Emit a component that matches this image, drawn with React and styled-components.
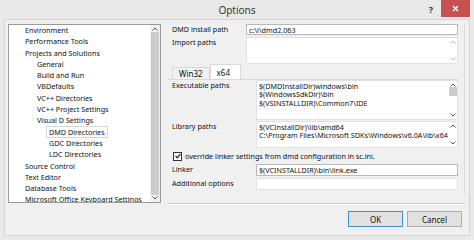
import styled, { createGlobalStyle } from 'styled-components'

const GlobalStyle = createGlobalStyle`
  body {
    margin: 0;
    background: #e8e8e8;
    font-family: "Noto Sans", "Open Sans", sans-serif;
    font-size: 7.2px;
    color: #111;
  }
`

const Window = styled.div`
  width: 474px;
  height: 240px;
  background: #e9e9e9;
  display: flex;
  flex-direction: column;
  box-sizing: border-box;
  overflow: hidden;
`

const TitleBar = styled.div`
  height: 19px;
  flex: none;
  position: relative;
  display: flex;
  align-items: center;
  justify-content: center;
  font-size: 10px;
  color: #3a3a3a;
`

const TitleButtons = styled.div`
  position: absolute;
  right: 4px;
  top: 0;
  display: flex;
  align-items: flex-start;
`

const HelpMark = styled.span`
  font-size: 9px;
  font-weight: bold;
  color: #333;
  margin: 3px 8px 0 0;
`

const CloseButton = styled.div`
  width: 29px;
  height: 17px;
  background: #c75050;
  color: #fff;
  display: flex;
  align-items: center;
  justify-content: center;
`

const Client = styled.div`
  flex: 1;
  margin: 0 4px 4px;
  background: #f0f0f0;
  border: 1px solid #d4d4d4;
  display: flex;
  padding: 4px 4px 0 3px;
  gap: 7px;
  min-width: 0;
`

const Tree = styled.div`
  width: 151px;
  height: 177px;
  background: #fff;
  border: 1px solid #9a9a9a;
  display: flex;
  overflow: hidden;
  flex: none;
`

const TreeList = styled.div`
  flex: 1;
  min-width: 0;
`

const TreeItem = styled.div`
  height: 11.3px;
  line-height: 11.3px;
  padding-left: ${p => 13 + p.$level * 12}px;
  white-space: nowrap;
  span {
    padding: 0 2px;
    border: 1px solid ${p => (p.$selected ? '#d6d6d6' : 'transparent')};
  }
`

const ScrollBar = styled.div`
  width: 10px;
  flex: none;
  background: #f0f0f0;
  display: flex;
  flex-direction: column;
  align-items: center;
  padding: 2px 0;
  gap: 1px;
  color: #555;
`

const Thumb = styled.div`
  width: 8px;
  flex: ${p => (p.$fill ? 1 : 'none')};
  height: ${p => (p.$fill ? 'auto' : '9px')};
  background: #cdcdcd;
`

const Right = styled.div`
  flex: 1;
  min-width: 0;
  display: flex;
  flex-direction: column;
`

const Fields = styled.div`
  border-right: 1px solid #dadada;
  padding: 0 6px 0 0;
  display: flex;
  flex-direction: column;
`

const Row = styled.div`
  display: flex;
  align-items: flex-start;
  min-width: 0;
  margin-bottom: ${p => p.$mb || 0}px;
`

const Label = styled.div`
  width: ${p => p.$w}px;
  flex: none;
  padding: 1px 0 0 4px;
  box-sizing: border-box;
  line-height: 9px;
`

const Input = styled.div`
  flex: 1;
  min-width: 0;
  height: ${p => p.$h || 11}px;
  background: #fff;
  border: 1px solid ${p => (p.$plain ? '#e2e2e2' : '#b9b9b9')};
  box-sizing: border-box;
  display: flex;
  line-height: 8.6px;
  padding-left: 2px;
  overflow: hidden;
  white-space: nowrap;
`

const InputText = styled.div`
  flex: 1;
  min-width: 0;
  overflow: hidden;
  padding-top: 0.5px;
`

const MiniScroll = styled.div`
  width: 9px;
  flex: none;
  display: flex;
  flex-direction: column;
  justify-content: space-between;
  align-items: center;
  padding: 2px 0;
  color: ${p => (p.$dim ? '#bdbdbd' : '#555')};
`

const Gap = styled.div`
  flex: 1;
`

const Tabs = styled.div`
  display: flex;
  align-items: flex-end;
  height: 15px;
  padding-left: 4px;
`

const Tab = styled.div`
  height: ${p => (p.$active ? 15 : 12)}px;
  padding: 0 ${p => (p.$active ? 10 : 6)}px 0 6px;
  background: ${p => (p.$active ? '#fff' : '#f0f0f0')};
  border: 1px solid #d9d9d9;
  border-bottom: none;
  box-sizing: border-box;
  display: flex;
  align-items: center;
  font-size: 8px;
`

const Pane = styled.div`
  border-top: 1px solid #d9d9d9;
  padding: 0 0 4px;
  display: flex;
  flex-direction: column;
`

const CheckRow = styled.div`
  display: flex;
  align-items: center;
  gap: 3px;
  padding: 3px 0 3px 5px;
  white-space: nowrap;
`

const CheckBox = styled.div`
  width: 7px;
  height: 7px;
  border: 1px solid #333;
  background: #fff;
  display: flex;
  align-items: center;
  justify-content: center;
`

const Separator = styled.div`
  height: 1px;
  background: #c9c9c9;
  margin: 9px 0 6px 0;
  border-bottom: 1px solid #fff;
`

const Buttons = styled.div`
  display: flex;
  justify-content: flex-end;
  gap: 4px;
  padding-right: 3px;
`

const Button = styled.div`
  width: 55px;
  height: 16px;
  box-sizing: border-box;
  background: #e1e1e1;
  border: 1px solid ${p => (p.$default ? '#3c8fdd' : '#adadad')};
  display: flex;
  align-items: center;
  justify-content: center;
  font-size: 8px;
`

const Chevron = ({ up }) => (
  <svg width="6" height="4" viewBox="0 0 6 4">
    <path d={up ? 'M0.5 3.5 L3 1 L5.5 3.5' : 'M0.5 0.5 L3 3 L5.5 0.5'} stroke="currentColor" strokeWidth="1" fill="none" />
  </svg>
)

const treeItems = [
  ['Environment', 0],
  ['Performance Tools', 0],
  ['Projects and Solutions', 0],
  ['General', 1],
  ['Build and Run', 1],
  ['VBDefaults', 1],
  ['VC++ Directories', 1],
  ['VC++ Project Settings', 1],
  ['Visual D Settings', 1],
  ['DMD Directories', 2, true],
  ['GDC Directories', 2],
  ['LDC Directories', 2],
  ['Source Control', 0],
  ['Text Editor', 0],
  ['Database Tools', 0],
  ['Microsoft Office Keyboard Settings', 0],
]

export default function App() {
  return (
    <>
      <GlobalStyle />
      <Window>
        <TitleBar>
          Options
          <TitleButtons>
            <HelpMark>?</HelpMark>
            <CloseButton>
              <svg width="7" height="7" viewBox="0 0 7 7">
                <path d="M1 1 L6 6 M6 1 L1 6" stroke="#fff" strokeWidth="1.4" />
              </svg>
            </CloseButton>
          </TitleButtons>
        </TitleBar>
        <Client>
          <Tree>
            <TreeList>
              {treeItems.map(([name, level, selected]) => (
                <TreeItem key={name} $level={level} $selected={selected}>
                  <span>{name}</span>
                </TreeItem>
              ))}
            </TreeList>
            <ScrollBar>
              <Chevron up />
              <Thumb $fill />
              <Chevron />
            </ScrollBar>
          </Tree>
          <Right>
            <Fields>
              <Row $mb={2}>
                <Label $w={78}>DMD install path</Label>
                <Input>
                  <InputText>c:\l\dmd2.063</InputText>
                </Input>
              </Row>
              <Row>
                <Label $w={78}>Import paths</Label>
                <Input $h={27} $plain>
                  <InputText />
                  <MiniScroll $dim>
                    <Chevron up />
                    <Chevron />
                  </MiniScroll>
                </Input>
              </Row>
              <Tabs>
                <Tab>Win32</Tab>
                <Tab $active>x64</Tab>
              </Tabs>
              <Pane>
                <Row $mb={1}>
                  <Label $w={88}>Executable paths</Label>
                  <Input $h={40} $plain>
                    <InputText>
                      $(DMDInstallDir)windows\bin
                      <br />
                      $(WindowsSdkDir)\bin
                      <br />
                      $(VSINSTALLDIR)\Common7\IDE
                    </InputText>
                    <MiniScroll>
                      <Chevron up />
                      <Thumb />
                      <Gap />
                      <Chevron />
                    </MiniScroll>
                  </Input>
                </Row>
                <Row>
                  <Label $w={88}>Library paths</Label>
                  <Input $h={27} $plain>
                    <InputText>
                      $(VCInstallDir)\lib\amd64
                      <br />
                      C:\Program Files\Microsoft SDKs\Windows\v6.0A\lib\x64
                    </InputText>
                    <MiniScroll>
                      <Chevron up />
                      <Chevron />
                    </MiniScroll>
                  </Input>
                </Row>
                <CheckRow>
                  <CheckBox>
                    <svg width="6" height="6" viewBox="0 0 6 6">
                      <path d="M0.6 3 L2.3 4.8 L5.4 0.8" stroke="#222" strokeWidth="1.2" fill="none" />
                    </svg>
                  </CheckBox>
                  override linker settings from dmd configuration in sc.ini.
                </CheckRow>
                <Row $mb={2}>
                  <Label $w={88}>Linker</Label>
                  <Input $h={12}>
                    <InputText>$(VCINSTALLDIR)\bin\link.exe</InputText>
                  </Input>
                </Row>
                <Row>
                  <Label $w={88}>Additional options</Label>
                  <Input $h={12} $plain />
                </Row>
              </Pane>
            </Fields>
            <Separator />
            <Buttons>
              <Button $default>OK</Button>
              <Button>Cancel</Button>
            </Buttons>
          </Right>
        </Client>
      </Window>
    </>
  )
}
